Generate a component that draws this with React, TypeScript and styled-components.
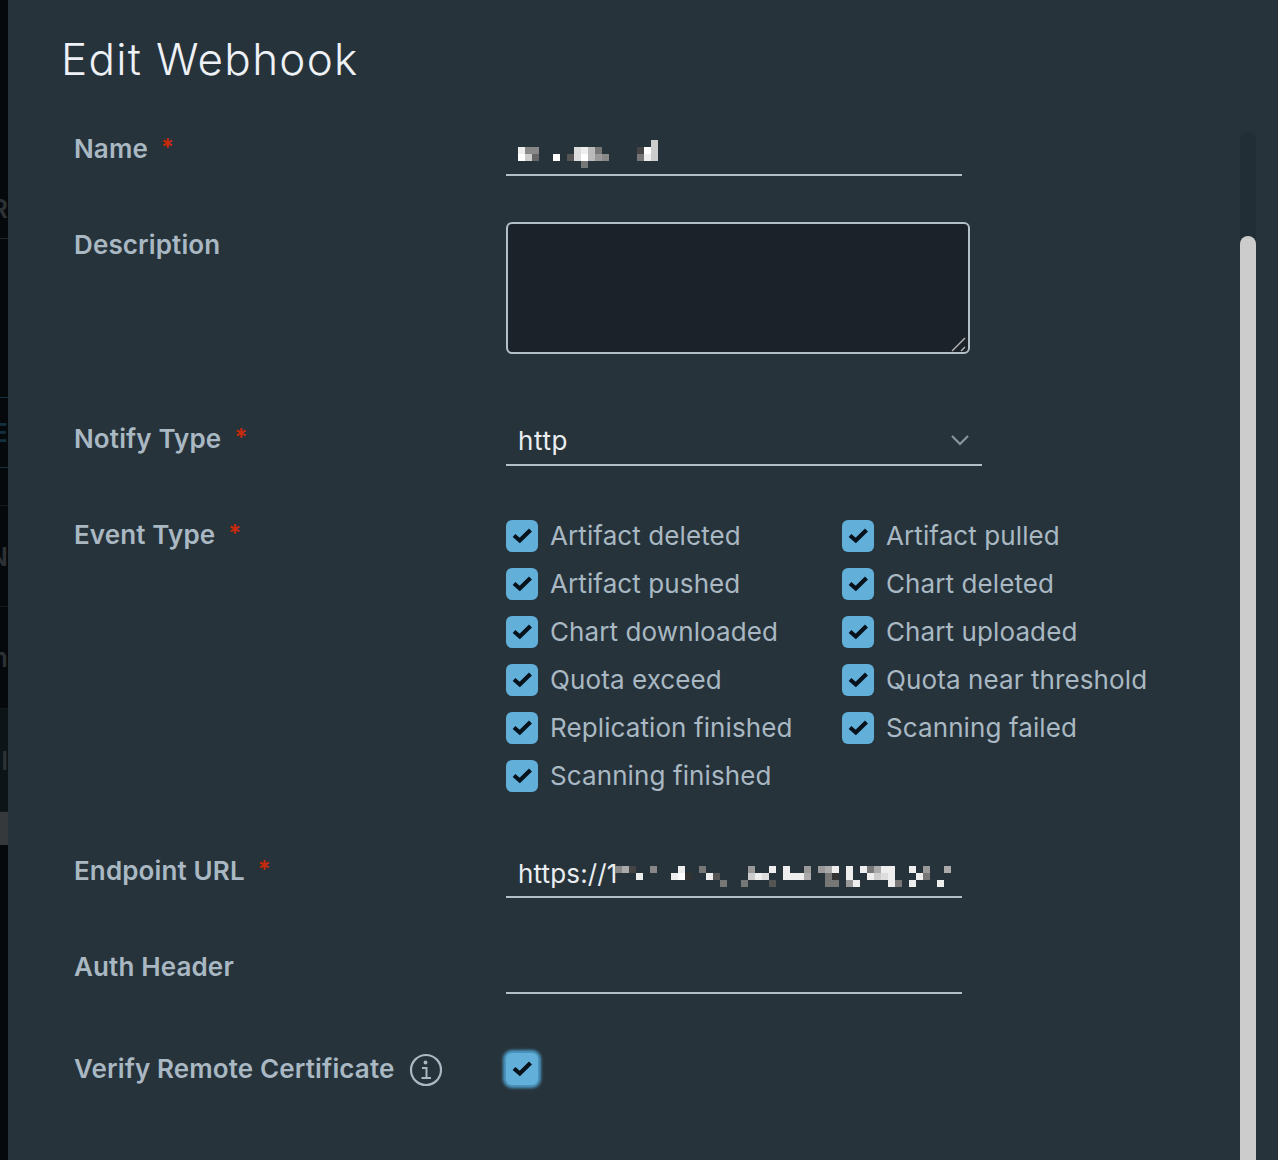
import React from "react";
import styled, { createGlobalStyle } from "styled-components";

const GlobalStyle = createGlobalStyle`
  html, body {
    margin: 0;
    padding: 0;
    height: 1160px;
    overflow: hidden;
    background: #05090b;
    font-family: Inter, "Open Sans", "Liberation Sans", sans-serif;
  }
`;

const Page = styled.div`
  display: flex;
  width: 1278px;
  height: 1160px;
  overflow: hidden;
`;

// the table behind the modal, only a sliver of it shows
const Backdrop = styled.aside`
  display: flex;
  flex-direction: column;
  flex: 0 0 8px;
  overflow: hidden;
`;
const BackdropRow = styled.div<{ $h: number; $line?: string; $bg?: string; $color?: string }>`
  display: flex;
  justify-content: flex-end;
  align-items: center;
  box-sizing: border-box;
  height: ${(p) => p.$h}px;
  flex: none;
  background: ${(p) => p.$bg || "transparent"};
  border-bottom: 1px solid ${(p) => p.$line || "transparent"};
  color: ${(p) => p.$color || "#2c3134"};
  font-size: 26px;
  font-weight: 600;
  white-space: nowrap;
`;

const Dialog = styled.main`
  position: relative;
  flex: 1;
  box-sizing: border-box;
  padding: 31px 0 0 54px;
  background: #26333b;
`;
const Title = styled.h1`
  margin: 0 0 0 -1px;
  height: 57px;
  font-size: 44px;
  line-height: 56px;
  font-weight: 300;
  letter-spacing: 1.3px;
  color: #eef1f5;
`;
const Form = styled.form`
  display: flex;
  flex-direction: column;
  padding: 40px 0 0 12px;
`;
const FormRow = styled.div<{ $top?: number }>`
  display: grid;
  grid-template-columns: 432px 1fr;
  margin-top: ${(p) => p.$top || 0}px;
`;
const Label = styled.div<{ $pad?: number }>`
  display: flex;
  align-items: flex-start;
  padding-top: ${(p) => p.$pad ?? 5}px;
  height: 32px;
  font-size: 26px;
  line-height: 32px;
  font-weight: 600;
  letter-spacing: 0.13px;
  color: #a9b8c2;
`;
const Required = styled.span`
  margin: 2px 0 0 13px;
  font-size: 24px;
  line-height: 26px;
  font-weight: 600;
  color: #c92a0c;
`;
const Field = styled.div<{ $w: number }>`
  display: flex;
  align-items: center;
  box-sizing: border-box;
  width: ${(p) => p.$w}px;
  height: 48px;
  padding: 0 12px;
  border-bottom: 2px solid #b3c0c8;
  font-size: 26px;
  letter-spacing: 0.15px;
  color: #e9edf0;
  white-space: nowrap;
`;
const SelectField = styled(Field)`
  justify-content: space-between;
  padding-bottom: 2px;
  letter-spacing: 0.6px;
`;
const TextBox = styled.div`
  position: relative;
  box-sizing: border-box;
  width: 464px;
  height: 132px;
  background: #1b2229;
  border: 2px solid #b3c0c8;
  border-radius: 6px;
`;
const Grip = styled.svg`
  position: absolute;
  right: 1px;
  bottom: 0;
`;
const Mosaic = styled.svg<{ $shift?: number }>`
  display: block;
  flex: none;
  margin: 6px 0 0 ${(p) => p.$shift || 0}px;
`;
const EventGrid = styled.div`
  display: grid;
  grid-template-columns: 336px 1fr;
  grid-auto-rows: 48px;
  align-items: center;
`;
const Option = styled.label`
  display: flex;
  align-items: center;
  gap: 12px;
  font-size: 26px;
  letter-spacing: 0.1px;
  color: #a9b8c2;
  white-space: nowrap;
`;
const OptionText = styled.span`
  margin-top: -2px;
`;
const CheckBox = styled.span<{ $focus?: boolean }>`
  display: flex;
  align-items: center;
  justify-content: center;
  width: 32px;
  height: 32px;
  border-radius: 6px;
  background: #62afd9;
  box-shadow: ${(p) => (p.$focus ? "0 0 3px 3px #4d98c4" : "none")};
`;
const InfoWrap = styled.svg`
  display: block;
  margin: 0 0 0 15px;
`;
const ScrollTrack = styled.div`
  position: absolute;
  top: 132px;
  right: 22px;
  bottom: 0;
  width: 16px;
  border-radius: 8px 8px 0 0;
  background: #222e36;
`;
const ScrollThumb = styled.div`
  position: absolute;
  top: 104px;
  left: 0;
  right: 0;
  bottom: 0;
  border-radius: 8px 8px 0 0;
  background: #cccccc;
`;

const Check = () => (
  <svg width="32" height="32" viewBox="0 0 32 32">
    <path d="M8 15.5 L13.8 20.5 L24.5 10" fill="none" stroke="#08121a" strokeWidth="4.2" />
  </svg>
);

const Pixels: React.FC<{ rows: string[]; shift?: number }> = ({ rows, shift }) => {
  const cell = 7;
  return (
    <Mosaic $shift={shift} width={rows[0].length * cell} height={rows.length * cell}>
      {rows.map((row, y) =>
        row.split("").map((c, x) => {
          if (c === ".") return null;
          const fill = `#${c}${c}${c}${c}${c}${c}`;
          return <rect key={`${x}-${y}`} x={x * cell} y={y * cell} width={cell} height={cell} fill={fill} />;
        })
      )}
    </Mosaic>
  );
};

const namePixels = [
  "...................c",
  "e88.....deb7.....4fc",
  "fc6..f.5dfb98....7ec",
  ".........7..........",
];
const urlPixels = [
  "8a4..8...e..7......9..e.e..9.9ae.e.e7aee..e.9..a",
  "...e....ef3..e5....ced..eeea..73.e..ecde...e7...",
  "...............7..7...5.......77.9e....e7.e...e.",
];

const events = [
  "Artifact deleted",
  "Artifact pulled",
  "Artifact pushed",
  "Chart deleted",
  "Chart downloaded",
  "Chart uploaded",
  "Quota exceed",
  "Quota near threshold",
  "Replication finished",
  "Scanning failed",
  "Scanning finished",
];

const App: React.FC = () => {
  return (
    <>
      <GlobalStyle />
      <Page>
        <Backdrop>
          <BackdropRow $h={179} />
          <BackdropRow $h={60} $line="#20262a">R</BackdropRow>
          <BackdropRow $h={159} $line="#16303f" />
          <BackdropRow $h={70} $line="#16303f" $color="#12303f">E</BackdropRow>
          <BackdropRow $h={38} $line="#14191c" />
          <BackdropRow $h={101} $line="#14191c">N</BackdropRow>
          <BackdropRow $h={102} $line="#14191c">n</BackdropRow>
          <BackdropRow $h={103} $bg="#0d1417" $line="#14191c">l</BackdropRow>
          <BackdropRow $h={33} $bg="#35393b" />
        </Backdrop>
        <Dialog>
          <Title>Edit Webhook</Title>
          <Form>
            <FormRow>
              <Label>Name<Required>*</Required></Label>
              <Field $w={456}><Pixels rows={namePixels} /></Field>
            </FormRow>
            <FormRow $top={46}>
              <Label $pad={7}>Description</Label>
              <TextBox>
                <Grip width="16" height="16" viewBox="0 0 16 16">
                  <path d="M1 15 L14 2 M10 15 L14 11" stroke="#b9b9b9" strokeWidth="1.4" fill="none" />
                </Grip>
              </TextBox>
            </FormRow>
            <FormRow $top={64}>
              <Label>Notify Type<Required>*</Required></Label>
              <SelectField $w={476}>
                http
                <svg width="20" height="12" viewBox="0 0 20 12">
                  <path d="M2 2 L10 10 L18 2" fill="none" stroke="#8f989e" strokeWidth="2" />
                </svg>
              </SelectField>
            </FormRow>
            <FormRow $top={46}>
              <Label $pad={7}>Event Type<Required>*</Required></Label>
              <EventGrid>
                {events.map((name) => (
                  <Option key={name}>
                    <CheckBox><Check /></CheckBox>
                    <OptionText>{name}</OptionText>
                  </Option>
                ))}
              </EventGrid>
            </FormRow>
            <FormRow $top={50}>
              <Label>Endpoint URL<Required>*</Required></Label>
              <Field $w={456}>https://1<Pixels rows={urlPixels} shift={-3} /></Field>
            </FormRow>
            <FormRow $top={48}>
              <Label>Auth Header</Label>
              <Field $w={456} />
            </FormRow>
            <FormRow $top={59}>
              <Label $pad={0}>
                Verify Remote Certificate
                <InfoWrap width="34" height="34" viewBox="0 0 34 34">
                  <circle cx="17" cy="17" r="15" fill="none" stroke="#a9b8c2" strokeWidth="2.2" />
                  <circle cx="16.5" cy="9.5" r="1.9" fill="#a9b8c2" />
                  <path d="M13 15 H17.5 V25 M12.5 25 H22" fill="none" stroke="#a9b8c2" strokeWidth="2" />
                </InfoWrap>
              </Label>
              <CheckBox $focus><Check /></CheckBox>
            </FormRow>
          </Form>
          <ScrollTrack><ScrollThumb /></ScrollTrack>
        </Dialog>
      </Page>
    </>
  );
};

export default App;
